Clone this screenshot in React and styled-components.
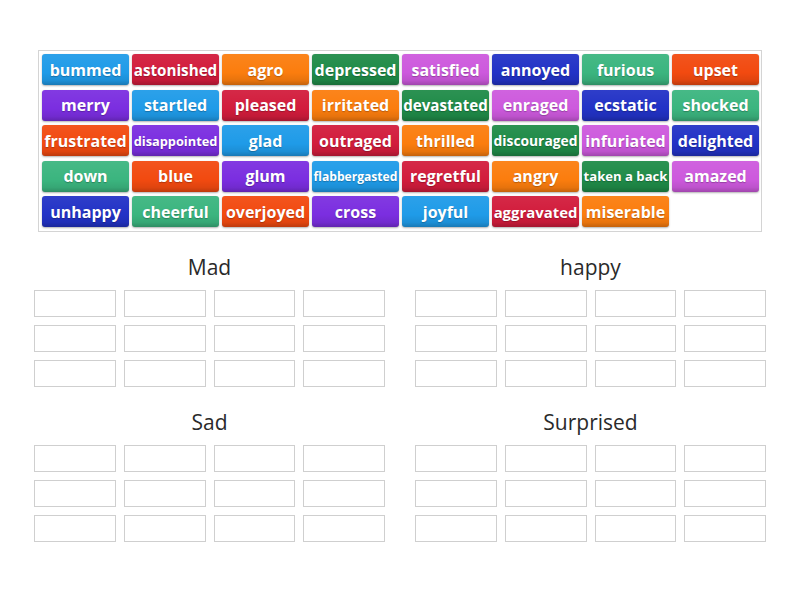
import { useLayoutEffect, useRef, useState } from "react";
import styled, { createGlobalStyle } from "styled-components";

const GlobalStyle = createGlobalStyle`
  html, body {
    margin: 0;
    padding: 0;
    background: #fff;
    font-family: "Open Sans", "Liberation Sans", sans-serif;
  }
`;

const palette = [
  "#1f9be8", // blue
  "#d21c3c", // crimson
  "#fb7d0e", // orange
  "#1f8b48", // dark green
  "#cd59dd", // pink
  "#2232c6", // navy
  "#3bb57f", // mint
  "#f24a10", // red orange
  "#7b2ee0", // purple
];

const words = [
  "bummed", "astonished", "agro", "depressed", "satisfied", "annoyed", "furious", "upset",
  "merry", "startled", "pleased", "irritated", "devastated", "enraged", "ecstatic", "shocked",
  "frustrated", "disappointed", "glad", "outraged", "thrilled", "discouraged", "infuriated", "delighted",
  "down", "blue", "glum", "flabbergasted", "regretful", "angry", "taken a back", "amazed",
  "unhappy", "cheerful", "overjoyed", "cross", "joyful", "aggravated", "miserable",
];

const groups = ["Mad", "happy", "Sad", "Surprised"];

/* Styled components */
const Page = styled.div`
  width: 800px;
  padding-top: 50px;
`;

const Pool = styled.div`
  width: 717px;
  margin: 0 auto;
  border: 1px solid #d4d4d4;
  box-sizing: content-box;
  padding: 3px 2px 4px 3px;
  display: grid;
  grid-template-columns: repeat(8, 87px);
  column-gap: 3px;
  row-gap: 4.5px;
`;

const Tile = styled.div`
  height: 31px;
  border-radius: 3px;
  background: linear-gradient(
      to bottom,
      rgba(255, 255, 255, 0.06) 0%,
      rgba(0, 0, 0, 0) 60%,
      rgba(0, 0, 0, 0.08) 85%,
      rgba(0, 0, 0, 0.22) 100%
    ),
    ${(p) => p.$color};
  box-shadow: 0 1px 2px rgba(0, 0, 0, 0.3);
  display: flex;
  align-items: center;
  justify-content: center;
  overflow: hidden;
`;

const TileText = styled.span`
  color: #fff;
  font-weight: 700;
  font-size: 16px;
  white-space: nowrap;
  text-shadow: 0 1px 1px rgba(0, 0, 0, 0.25);
`;

const Groups = styled.div`
  width: 732px;
  margin: 0 auto;
  display: grid;
  grid-template-columns: 351px 351px;
  column-gap: 30px;
`;

const Group = styled.div`
  margin-top: 20px;
`;

const GroupTitle = styled.div`
  height: 30px;
  line-height: 30px;
  text-align: center;
  font-size: 21px;
  color: #2a2a2a;
  margin-bottom: 8px;
`;

const Slots = styled.div`
  display: grid;
  grid-template-columns: repeat(4, 1fr);
  gap: 8px;
`;

const Slot = styled.div`
  height: 27px;
  border: 1px solid #cfcfcf;
  box-sizing: border-box;
`;

function WordTile({ word, color }) {
  const ref = useRef(null);
  const [size, setSize] = useState(16);

  // shrink long words so they fit the tile
  useLayoutEffect(() => {
    const el = ref.current;
    if (!el) return;
    const w = el.scrollWidth;
    const max = 84;
    if (w > max) setSize((s) => Math.floor(s * (max / w) * 10) / 10);
  }, [word]);

  return (
    <Tile $color={color}>
      <TileText ref={ref} style={{ fontSize: size }}>
        {word}
      </TileText>
    </Tile>
  );
}

function App() {
  return (
    <Page>
      <GlobalStyle />
      <Pool>
        {words.map((w, i) => (
          <WordTile key={w} word={w} color={palette[i % palette.length]} />
        ))}
      </Pool>
      <Groups>
        {groups.map((g) => (
          <Group key={g}>
            <GroupTitle>{g}</GroupTitle>
            <Slots>
              {Array.from({ length: 12 }).map((_, i) => (
                <Slot key={i} />
              ))}
            </Slots>
          </Group>
        ))}
      </Groups>
    </Page>
  );
}

export default App;
